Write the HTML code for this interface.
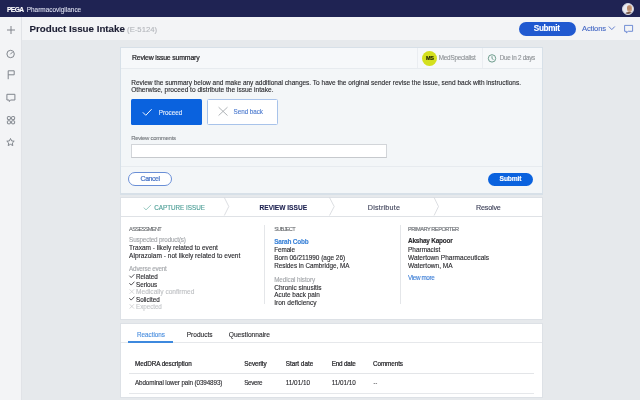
<!DOCTYPE html>
<html><head><meta charset="utf-8">
<style>
*{margin:0;padding:0;box-sizing:border-box}
html,body{width:640px;height:400px;overflow:hidden}
body{background:#e6e9ec;font-family:"Liberation Sans",sans-serif;position:relative;color:#2a2a2e}
.a,.t{position:absolute;white-space:nowrap}
svg.a{overflow:visible}
.t{-webkit-text-stroke:.12px currentColor}
body>*{filter:blur(.25px)}
</style></head><body>

<!-- top header -->
<div class="a" style="left:0;top:0;width:640px;height:17.2px;background:#1f2353"></div>
<div class="a" style="left:622.4px;top:2.6px;width:12px;height:12px;border-radius:50%;overflow:hidden;background:#e9eaf0;border:.6px solid #cfd2de">
<div class="a" style="left:3.3px;top:1.6px;width:5.4px;height:7px;border-radius:50%;background:#c99f7f"></div>
<div class="a" style="left:4px;top:2.6px;width:4px;height:3.5px;border-radius:50%;background:#b88a6a"></div>
<div class="a" style="left:2px;top:8.6px;width:8px;height:5px;border-radius:50%;background:#6b4c3c"></div>
</div>

<!-- side nav -->
<div class="a" style="left:0;top:17px;width:22px;height:383px;background:#f3f4f6;border-right:1px solid #e1e3e7"></div>
<svg class="a" style="left:0;top:17px" width="22" height="140">
  <g stroke="#7a7f87" fill="none" stroke-width="0.95">
    <path d="M11 9v8M7 13h8"/>
    <circle cx="10.6" cy="37" r="3.7"/><path d="M10.3 37.3l2.3-2.3"/>
    <path d="M8.2 62.2v-8.4h6v4h-6"/>
    <path d="M6.9 77.3h8v5.7h-4.1l-1.6 1.5v-1.5h-2.3z"/>
    <rect x="7.4" y="99.6" width="3" height="3" rx=".6"/><rect x="11.6" y="99.6" width="3" height="3" rx=".6"/>
    <rect x="7.4" y="103.8" width="3" height="3" rx=".6"/><rect x="11.6" y="103.8" width="3" height="3" rx=".6"/>
    <path d="M10.5 121.5l1.1 2.4 2.6.3-1.9 1.8.5 2.6-2.3-1.3-2.3 1.3.5-2.6-1.9-1.8 2.6-.3z"/>
  </g>
</svg>

<!-- title bar -->
<div class="a" style="left:22px;top:17px;width:618px;height:22.7px;background:#f3f4f6"></div>
<div class="a" style="left:518.8px;top:21.7px;width:57.2px;height:14px;border-radius:7px;background:#2059d0"></div>
<svg class="a" style="left:0;top:0" width="640" height="40">
  <path d="M608.8 26.5l3 3.1 3-3.1" stroke="#4a6cc6" stroke-width=".85" fill="none"/>
  <path d="M624.6 25.4h8v5.9h-4.3l-2 1.5v-1.5h-1.7z" stroke="#4f74cc" stroke-width=".8" fill="none"/>
</svg>

<!-- card 1 -->
<div class="a" style="left:119.5px;top:46.5px;width:423.5px;height:148px;background:#d7e0e8"></div>
<div class="a" style="left:120.5px;top:47.5px;width:421.5px;height:145.5px;background:#f3f6f8"></div>
<div class="a" style="left:120.5px;top:47.5px;width:421.5px;height:21px;background:#f6f8fa;border-bottom:1px solid #e7ebef"></div>
<div class="a" style="left:417.3px;top:47.5px;width:.8px;height:20.5px;background:#eaedf1"></div>
<div class="a" style="left:481.5px;top:47.5px;width:.8px;height:20.5px;background:#eaedf1"></div>
<div class="a" style="left:422.2px;top:50.6px;width:15px;height:15px;border-radius:50%;background:#d4e01e"></div>
<svg class="a" style="left:0;top:0" width="640" height="200">
  <circle cx="492" cy="58.4" r="3.7" stroke="#5f9280" stroke-width=".9" fill="none"/>
  <path d="M492 56.2v2.4l1.5 1" stroke="#5f9280" stroke-width=".9" fill="none"/>
</svg>

<div class="a" style="left:131px;top:99px;width:70.6px;height:26.2px;background:#0a62de;border-radius:1.5px"></div>
<div class="a" style="left:206.8px;top:99px;width:70.8px;height:26.2px;background:#fff;border:1px solid #a8c3ea;border-radius:1.5px"></div>
<svg class="a" style="left:0;top:0" width="640" height="200">
  <path d="M142.8 112.3l3 3 5.8-6.1" stroke="#ffffff" stroke-width=".95" fill="none"/>
  <path d="M218.6 107.2l8.9 8.3M227.5 107.2l-8.9 8.3" stroke="#a2a6ab" stroke-width=".85" fill="none"/>
</svg>
<div class="a" style="left:130.8px;top:144px;width:256.4px;height:13.5px;background:#fff;border:1px solid #d2d5d9;border-bottom-color:#c6c9cd"></div>
<div class="a" style="left:120.5px;top:165.5px;width:421.5px;height:1px;background:#e7ebef"></div>
<div class="a" style="left:128.4px;top:172.2px;width:43.3px;height:14.3px;border-radius:7.2px;background:#fff;border:1px solid #6a8fd6"></div>
<div class="a" style="left:488px;top:172.7px;width:45px;height:13.3px;border-radius:6.7px;background:#0a62de"></div>

<!-- card 2 -->
<div class="a" style="left:119.5px;top:197px;width:423px;height:123px;background:#fff;border:1px solid #dde1e6"></div>
<div class="a" style="left:120.5px;top:215.5px;width:421px;height:1px;background:#dfe2e6"></div>
<svg class="a" style="left:0;top:0" width="640" height="400">
  <path d="M224.3 197.5l4.5 9-4.5 9M329.5 197.5l4.7 9-4.7 9M434.1 197.5l4.4 9-4.4 9" stroke="#d3d6da" stroke-width=".8" fill="none"/>
  <path d="M143.8 207.6l2.2 2.3 5-5" stroke="#7bbbb0" stroke-width=".8" fill="none"/>
  <g stroke="#2a2a2e" stroke-width=".8" fill="none">
    <path d="M129.4 275.7l1.8 1.9 3.2-3.4M129.4 283.2l1.8 1.9 3.2-3.4M129.4 298.2l1.8 1.9 3.2-3.4"/>
  </g>
  <g stroke="#c4c6c9" stroke-width=".7" fill="none">
    <path d="M129.6 289.4l4.4 4.4M134 289.4l-4.4 4.4M129.6 304.2l4.4 4.4M134 304.2l-4.4 4.4"/>
  </g>
</svg>
<div class="a" style="left:264.2px;top:225px;width:.8px;height:79px;background:#e4e6e9"></div>
<div class="a" style="left:400.2px;top:225px;width:.8px;height:79px;background:#e4e6e9"></div>

<!-- card 3 -->
<div class="a" style="left:119.5px;top:322.5px;width:423px;height:75.5px;background:#fff;border:1px solid #dde1e6"></div>
<div class="a" style="left:120.5px;top:342.2px;width:421px;height:.8px;background:#e6e8eb"></div>
<div class="a" style="left:128px;top:341.2px;width:45px;height:1.6px;background:#3d89de"></div>
<div class="a" style="left:129px;top:372.5px;width:404.5px;height:1.2px;background:#e3e5e8"></div>
<div class="a" style="left:129px;top:392.6px;width:404.5px;height:1.2px;background:#e6e8eb"></div>

<div class="t" id="t0" style="left:7.00px;top:6.93px;font-size:6.70px;line-height:6.70px;color:#ffffff;letter-spacing:-0.596px;font-weight:bold">PEGA</div>
<div class="t" id="t1" style="left:26.70px;top:7.13px;font-size:6.46px;line-height:6.46px;color:#d9dcec">Pharmacovigilance</div>
<div class="t" id="t2" style="left:29.40px;top:24.12px;font-size:9.77px;line-height:9.77px;color:#1c1e33;font-weight:bold">Product Issue Intake</div>
<div class="t" id="t3" style="left:127.10px;top:25.63px;font-size:7.71px;line-height:7.71px;color:#b3b6bb">(E-5124)</div>
<div class="t" id="t4" style="left:533.75px;top:25.40px;font-size:8.20px;line-height:8.20px;color:#ffffff;letter-spacing:-0.308px;font-weight:bold">Submit</div>
<div class="t" id="t5" style="left:582.10px;top:24.76px;font-size:7.60px;line-height:7.60px;color:#4568c4;letter-spacing:-0.170px">Actions</div>
<div class="t" id="t6" style="left:131.90px;top:55.38px;font-size:6.90px;line-height:6.90px;color:#2a2a2e;letter-spacing:-0.162px;-webkit-text-stroke:0.24px #2a2a2e">Review issue summary</div>
<div class="t" id="t7" style="left:425.90px;top:55.86px;font-size:5.60px;line-height:5.60px;color:#141804;letter-spacing:-0.400px;font-weight:bold">MS</div>
<div class="t" id="t8" style="left:438.75px;top:55.45px;font-size:6.32px;line-height:6.32px;color:#8e9296;letter-spacing:-0.199px">MedSpecialist</div>
<div class="t" id="t9" style="left:499.70px;top:55.45px;font-size:6.32px;line-height:6.32px;color:#8e9296;letter-spacing:-0.254px">Due in 2 days</div>
<div class="t" id="t10" style="left:131.25px;top:79.57px;font-size:6.50px;line-height:6.50px;color:#2a2a2e">Review the summary below and make any additional changes. To have the original sender revise the issue, send back with instructions.</div>
<div class="t" id="t11" style="left:131.25px;top:87.02px;font-size:6.59px;line-height:6.59px;color:#2a2a2e">Otherwise, proceed to distribute the issue intake.</div>
<div class="t" id="t12" style="left:158.75px;top:109.84px;font-size:6.35px;line-height:6.35px;color:#e3ecfb">Proceed</div>
<div class="t" id="t13" style="left:233.60px;top:109.23px;font-size:6.32px;line-height:6.32px;color:#4d7bcf;letter-spacing:-0.060px">Send back</div>
<div class="t" id="t14" style="left:131.25px;top:135.45px;font-size:6.00px;line-height:6.00px;color:#75797e;letter-spacing:-0.305px">Review comments</div>
<div class="t" id="t15" style="left:140.60px;top:175.77px;font-size:6.90px;line-height:6.90px;color:#4d78c8;letter-spacing:-0.416px;-webkit-text-stroke:0.24px #4d78c8">Cancel</div>
<div class="t" id="t16" style="left:499.60px;top:176.18px;font-size:6.70px;line-height:6.70px;color:#ffffff;letter-spacing:-0.161px;font-weight:bold">Submit</div>
<div class="t" id="t17" style="left:154.20px;top:205.00px;font-size:6.32px;line-height:6.32px;color:#4e9f97;letter-spacing:-0.010px">CAPTURE ISSUE</div>
<div class="t" id="t18" style="left:259.50px;top:204.83px;font-size:6.58px;line-height:6.58px;color:#1d2150;font-weight:bold">REVIEW ISSUE</div>
<div class="t" id="t19" style="left:367.75px;top:204.40px;font-size:7.20px;line-height:7.20px;color:#3d4058;letter-spacing:0.204px">Distribute</div>
<div class="t" id="t20" style="left:476.00px;top:204.40px;font-size:7.20px;line-height:7.20px;color:#3d4058;letter-spacing:-0.186px">Resolve</div>
<div class="t" id="t21" style="left:129.10px;top:226.96px;font-size:5.70px;line-height:5.70px;color:#5d6064;letter-spacing:-0.684px;-webkit-text-stroke:.05px #5d6064">ASSESSMENT</div>
<div class="t" id="t22" style="left:129.10px;top:236.91px;font-size:6.32px;line-height:6.32px;color:#a3a6aa;letter-spacing:-0.167px">Suspected product(s)</div>
<div class="t" id="t23" style="left:129.10px;top:245.39px;font-size:6.52px;line-height:6.52px;color:#2a2a2e">Traxam - likely related to event</div>
<div class="t" id="t24" style="left:129.10px;top:252.55px;font-size:6.57px;line-height:6.57px;color:#2a2a2e">Alprazolam - not likely related to event</div>
<div class="t" id="t25" style="left:129.10px;top:265.60px;font-size:6.32px;line-height:6.32px;color:#a3a6aa;letter-spacing:-0.217px">Adverse event</div>
<div class="t" id="t26" style="left:136.00px;top:274.33px;font-size:6.32px;line-height:6.32px;color:#2a2a2e;letter-spacing:-0.006px">Related</div>
<div class="t" id="t27" style="left:136.00px;top:282.48px;font-size:6.32px;line-height:6.32px;color:#2a2a2e;letter-spacing:-0.030px">Serious</div>
<div class="t" id="t28" style="left:136.00px;top:289.40px;font-size:6.61px;line-height:6.61px;color:#bfc1c4">Medically confirmed</div>
<div class="t" id="t29" style="left:136.00px;top:296.90px;font-size:6.32px;line-height:6.32px;color:#2a2a2e;letter-spacing:-0.017px">Solicited</div>
<div class="t" id="t30" style="left:136.00px;top:304.35px;font-size:6.32px;line-height:6.32px;color:#c4c6c9;letter-spacing:-0.064px">Expected</div>
<div class="t" id="t31" style="left:274.20px;top:226.76px;font-size:5.70px;line-height:5.70px;color:#5d6064;letter-spacing:-0.745px;-webkit-text-stroke:.05px #5d6064">SUBJECT</div>
<div class="t" id="t32" style="left:274.20px;top:239.05px;font-size:6.45px;line-height:6.45px;color:#3a82d8;letter-spacing:-0.189px;font-weight:bold">Sarah Cobb</div>
<div class="t" id="t33" style="left:274.20px;top:247.22px;font-size:6.32px;line-height:6.32px;color:#2a2a2e;letter-spacing:-0.055px">Female</div>
<div class="t" id="t34" style="left:274.20px;top:255.21px;font-size:6.43px;line-height:6.43px;color:#2a2a2e">Born 06/211990 (age 26)</div>
<div class="t" id="t35" style="left:274.20px;top:262.90px;font-size:6.33px;line-height:6.33px;color:#2a2a2e">Resides in Cambridge, MA</div>
<div class="t" id="t36" style="left:274.20px;top:276.91px;font-size:6.32px;line-height:6.32px;color:#a3a6aa;letter-spacing:-0.075px">Medical history</div>
<div class="t" id="t37" style="left:274.20px;top:284.67px;font-size:6.53px;line-height:6.53px;color:#2a2a2e">Chronic sinusitis</div>
<div class="t" id="t38" style="left:274.20px;top:292.38px;font-size:6.42px;line-height:6.42px;color:#2a2a2e">Acute back pain</div>
<div class="t" id="t39" style="left:274.20px;top:300.19px;font-size:6.59px;line-height:6.59px;color:#2a2a2e">Iron deficiency</div>
<div class="t" id="t40" style="left:408.00px;top:227.06px;font-size:5.60px;line-height:5.60px;color:#7d8085;letter-spacing:-0.445px;-webkit-text-stroke:0.24px #7d8085">PRIMARY REPORTER</div>
<div class="t" id="t41" style="left:408.00px;top:238.24px;font-size:6.45px;line-height:6.45px;color:#2a2a2e;letter-spacing:-0.213px;font-weight:bold">Akshay Kapoor</div>
<div class="t" id="t42" style="left:408.00px;top:246.55px;font-size:6.46px;line-height:6.46px;color:#2a2a2e">Pharmacist</div>
<div class="t" id="t43" style="left:408.00px;top:254.56px;font-size:6.54px;line-height:6.54px;color:#2a2a2e">Watertown Pharmaceuticals</div>
<div class="t" id="t44" style="left:408.00px;top:262.82px;font-size:6.58px;line-height:6.58px;color:#2a2a2e">Watertown, MA</div>
<div class="t" id="t45" style="left:408.00px;top:275.26px;font-size:6.30px;line-height:6.30px;color:#3d7fd6;letter-spacing:-0.362px">View more</div>
<div class="t" id="t46" style="left:137.00px;top:332.25px;font-size:6.32px;line-height:6.32px;color:#4a8ede;letter-spacing:-0.013px">Reactions</div>
<div class="t" id="t47" style="left:186.75px;top:332.07px;font-size:6.53px;line-height:6.53px;color:#2a2a2e">Products</div>
<div class="t" id="t48" style="left:228.75px;top:331.99px;font-size:6.63px;line-height:6.63px;color:#2a2a2e">Questionnaire</div>
<div class="t" id="t49" style="left:135.00px;top:361.00px;font-size:6.32px;line-height:6.32px;color:#2a2a2e;letter-spacing:-0.050px;-webkit-text-stroke:0.24px #2a2a2e">MedDRA description</div>
<div class="t" id="t50" style="left:244.25px;top:361.00px;font-size:6.32px;line-height:6.32px;color:#2a2a2e;letter-spacing:-0.047px;-webkit-text-stroke:0.24px #2a2a2e">Severity</div>
<div class="t" id="t51" style="left:285.75px;top:360.98px;font-size:6.34px;line-height:6.34px;color:#2a2a2e;-webkit-text-stroke:0.24px #2a2a2e">Start date</div>
<div class="t" id="t52" style="left:331.75px;top:361.00px;font-size:6.32px;line-height:6.32px;color:#2a2a2e;letter-spacing:-0.186px;-webkit-text-stroke:0.24px #2a2a2e">End date</div>
<div class="t" id="t53" style="left:373.00px;top:361.00px;font-size:6.32px;line-height:6.32px;color:#2a2a2e;letter-spacing:-0.080px;-webkit-text-stroke:0.24px #2a2a2e">Comments</div>
<div class="t" id="t54" style="left:135.00px;top:379.75px;font-size:6.32px;line-height:6.32px;color:#2a2a2e;letter-spacing:-0.121px">Abdominal lower pain (0394893)</div>
<div class="t" id="t55" style="left:244.25px;top:379.75px;font-size:6.32px;line-height:6.32px;color:#2a2a2e;letter-spacing:-0.354px">Severe</div>
<div class="t" id="t56" style="left:285.75px;top:379.72px;font-size:6.35px;line-height:6.35px;color:#2a2a2e">11/01/10</div>
<div class="t" id="t57" style="left:331.75px;top:379.75px;font-size:6.32px;line-height:6.32px;color:#2a2a2e;letter-spacing:-0.019px">11/01/10</div>
<div class="t" id="t58" style="left:373.60px;top:380.70px;font-size:5.20px;line-height:5.20px;color:#2a2a2e;letter-spacing:0.137px">--</div>
</body></html>
